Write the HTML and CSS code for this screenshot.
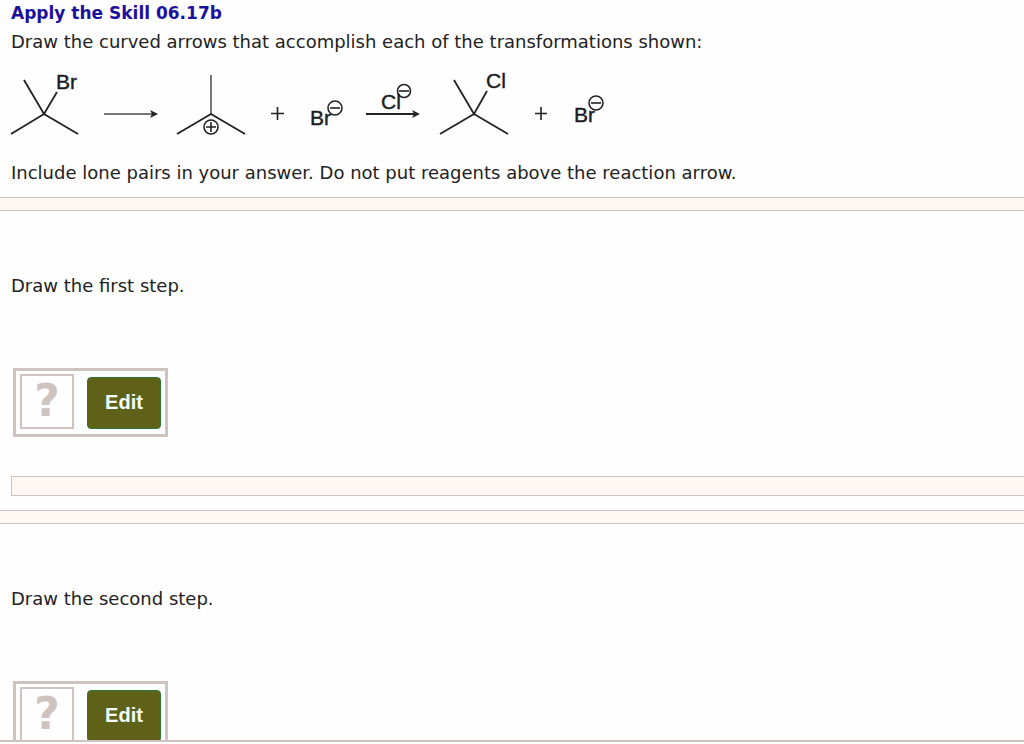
FILE: index.html
```html
<!DOCTYPE html>
<html lang="en">
<head>
<meta charset="utf-8">
<title>Apply the Skill 06.17b</title>
<link rel="stylesheet" href="styles.css">
</head>
<body>
<main class="page">
  <section class="intro">
    <h1 class="title">Apply the Skill 06.17b</h1>
    <p class="text">Draw the curved arrows that accomplish each of the transformations shown:</p>
    <svg class="scheme" width="620" height="76" viewBox="0 64 620 76" role="img" aria-label="Reaction scheme">
      <g class="bond">
        <path d="M24 80L44 114L57 92M11 134L44 114L78 134"/>
        <path class="soft" d="M211 75V114"/>
        <path d="M177 134L211 114L245 134"/>
        <path d="M454 80L474 114L487 91M440 134L474 114L508 134"/>
      </g>
      <g class="shaft">
        <path class="soft" d="M104 114H155"/>
        <path d="M366 114H417"/>
      </g>
      <path class="head" d="M150 110L158 114L150 118L152 114ZM412 110L420 114L412 118L414 114Z"/>
      <g class="charge">
        <circle cx="211" cy="127" r="7"/>
        <path d="M206 127H216M211 122V132"/>
        <circle cx="335" cy="108" r="7"/>
        <path d="M330 108H340"/>
        <circle cx="404" cy="91" r="6.5"/>
        <path d="M399 91H409"/>
        <circle cx="596" cy="103" r="7"/>
        <path d="M591 103H601"/>
        <path d="M271 113.500H284M277.500 107V120M535 113.500H547M541 107V120"/>
      </g>
      <g class="atom">
        <text x="56" y="89">Br</text>
        <text x="310" y="125">Br</text>
        <text x="381" y="109">Cl</text>
        <text x="486" y="88">Cl</text>
        <text x="574" y="122">Br</text>
      </g>
    </svg>
    <p class="text">Include lone pairs in your answer. Do not put reagents above the reaction arrow.</p>
  </section>
  <section class="step">
    <div class="divider"></div>
    <div class="body">
      <p class="text">Draw the first step.</p>
      <div class="answer">
        <span class="unknown">?</span>
        <button class="edit" type="button">Edit</button>
      </div>
      <div class="feedback"></div>
    </div>
  </section>
  <section class="step">
    <div class="divider"></div>
    <div class="body">
      <p class="text">Draw the second step.</p>
      <div class="answer">
        <span class="unknown">?</span>
        <button class="edit" type="button">Edit</button>
      </div>
      <div class="feedback"></div>
    </div>
  </section>
</main>
</body>
</html>
```

FILE: styles.css
```css
* {
  box-sizing: border-box;
}

body {
  margin: 0;
  background: #fefefe;
  color: #222;
  font-family: Verdana, "DejaVu Sans", sans-serif;
  font-size: 18px;
  line-height: 24px;
}

.page {
  height: calc(100vh - 2px);
  overflow: hidden;
  border-bottom: 2px solid #cfc3c0;
}

.intro {
  padding: 1px 0 12px 11px;
}

.title {
  margin: 0 0 5px;
  color: #1c109c;
  font-size: 17px;
  line-height: 24px;
}

.text {
  margin: 0;
}

.scheme {
  display: block;
  margin: 10px 0 21px -11px;
}

.bond,
.shaft,
.charge {
  fill: none;
  stroke: #222;
  stroke-width: 1.8;
}

.charge {
  stroke-width: 1.6;
}

.bond .soft,
.shaft .soft {
  stroke: #777;
  stroke-width: 2;
}

.head {
  fill: #222;
}

.atom {
  fill: #1c1c1c;
  stroke: #1c1c1c;
  stroke-width: 0.4;
  font-family: Arial, "Liberation Sans", sans-serif;
  font-size: 21px;
}

.divider {
  height: 14px;
  border: solid #cfc3c0;
  border-width: 1px 0;
  background: #fdf7f4;
}

.body {
  padding: 63px 0 14px 11px;
}

.answer {
  display: flex;
  align-items: flex-start;
  gap: 13px;
  width: fit-content;
  margin: 70px 0 39px 2px;
  padding: 3px 4px 4px;
  border: 3px solid #cfc3c0;
}

.unknown {
  width: 54px;
  height: 55px;
  border: 2px solid #cfc3c0;
  color: #cfc3c0;
  font-size: 44px;
  font-weight: bold;
  line-height: 50px;
  text-align: center;
}

.edit {
  width: 74px;
  height: 52px;
  margin: 3px 0 1px;
  padding: 0 0 2px;
  border: 1px solid #2a7a35;
  border-radius: 4px;
  background: #606119;
  color: #f4fffb;
  font: bold 20px/24px Arial, "Liberation Sans", sans-serif;
}

.feedback {
  height: 20px;
  border: 1px solid #cfc3c0;
  border-right: 0;
  background: #fdf7f4;
}
```
